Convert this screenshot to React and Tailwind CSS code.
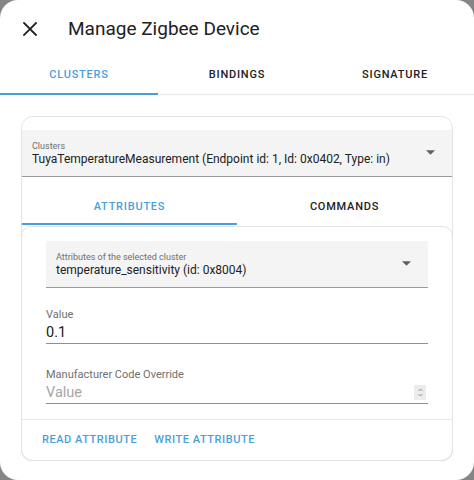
import { useState } from 'react';

const BLUE = 'text-[#4a9fd9]';

const CloseIcon = () => (
  <svg width="14" height="14" viewBox="0 0 14 14" className="text-[#212121]">
    <path d="M1 1 L13 13 M13 1 L1 13" stroke="currentColor" strokeWidth="1.8" strokeLinecap="square" />
  </svg>
);

const Arrow = () => (
  <svg width="9" height="5" viewBox="0 0 10 5" className="text-[#616161]">
    <path d="M0 0 L10 0 L5 5 Z" fill="currentColor" />
  </svg>
);

const Tab = ({ label, active, onClick, className }) => (
  <button
    type="button"
    onClick={onClick}
    className={`flex flex-1 items-center justify-center border-b-2 text-[11px] font-medium uppercase tracking-[0.07em] ${
      active ? 'border-[#4a9fd9] text-[#4a9fd9]' : 'border-transparent text-[#212121]'
    } ${className}`}
  >
    {label}
  </button>
);

const Select = ({ label, value, className }) => (
  <div
    className={`flex h-[47px] items-start justify-between border-b border-[#9a9a9a] bg-[#f4f4f4] ${className}`}
  >
    <div className="flex flex-col pt-[11px]">
      <span className="text-[9px] leading-[10px] text-[#6f6f6f]">{label}</span>
      <span className="mt-[1px] text-[12px] leading-[15px] text-[#212121]">{value}</span>
    </div>
    <div className="pt-[20px]">
      <Arrow />
    </div>
  </div>
);

export default function App() {
  const [tab, setTab] = useState('clusters');
  const [subTab, setSubTab] = useState('attributes');

  return (
    <div className="h-[480px] w-[474px] bg-[#858585]" style={{ fontFamily: 'Roboto, "Noto Sans", sans-serif' }}>
      <div className="flex h-[480px] flex-col overflow-hidden rounded-[18px] bg-white">
        <header className="flex h-[54px] items-center pt-[4px]">
          <button type="button" className="ml-[23px] flex h-[14px] w-[14px] items-center justify-center">
            <CloseIcon />
          </button>
          <h1 className="ml-[31px] text-[19px] text-[#212121]">Manage Zigbee Device</h1>
        </header>

        <nav className="flex h-[41px] border-b border-[#e8e8e8]">
          <Tab label="Clusters" active={tab === 'clusters'} onClick={() => setTab('clusters')} className="-mb-px pt-[3px]" />
          <Tab label="Bindings" active={tab === 'bindings'} onClick={() => setTab('bindings')} className="-mb-px pt-[3px]" />
          <Tab label="Signature" active={tab === 'signature'} onClick={() => setTab('signature')} className="-mb-px pt-[3px]" />
        </nav>

        <section className="mx-[21px] mt-[21px] rounded-[12px] border border-[#e3e3e3] pt-[13px]">
          <Select
            label="Clusters"
            value="TuyaTemperatureMeasurement (Endpoint id: 1, Id: 0x0402, Type: in)"
            className="pl-[10px] pr-[17px]"
          />

          <div className="flex h-[48px]">
            <Tab
              label="Attributes"
              active={subTab === 'attributes'}
              onClick={() => setSubTab('attributes')}
              className="pt-[14px]"
            />
            <Tab
              label="Commands"
              active={subTab === 'commands'}
              onClick={() => setSubTab('commands')}
              className="pt-[14px]"
            />
          </div>

          <div className="-mx-px -mb-px mt-[1px] rounded-[10px] border border-[#e3e3e3]">
            <div className="px-[24px] pb-[15px] pt-[14px]">
              <Select
                label="Attributes of the selected cluster"
                value="temperature_sensitivity (id: 0x8004)"
                className="pl-[10px] pr-[17px]"
              />

              <label className="mt-[20px] flex flex-col">
                <span className="text-[11px] leading-[14px] text-[#6f6f6f]">Value</span>
                <input
                  defaultValue="0.1"
                  className="h-[22px] border-b border-[#8f8f8f] text-[14.5px] text-[#212121] outline-none"
                />
              </label>

              <label className="mt-[24px] flex flex-col">
                <span className="text-[11px] leading-[14px] text-[#6f6f6f]">Manufacturer Code Override</span>
                <div className="flex h-[22px] items-center border-b border-[#8f8f8f]">
                  <input
                    placeholder="Value"
                    className="min-w-0 flex-1 text-[14.5px] text-[#212121] outline-none placeholder:text-[#a5a5a5]"
                  />
                  <span className="mr-[2px] flex h-[15px] w-[12px] items-center justify-center bg-[#ececec] text-[#8a8a8a]">
                    <svg width="7" height="11" viewBox="0 0 7 11">
                      <path d="M1.5 4 L3.5 2 L5.5 4 M1.5 7 L3.5 9 L5.5 7" stroke="currentColor" strokeWidth="0.9" fill="none" />
                    </svg>
                  </span>
                </div>
              </label>
            </div>

            <footer className={`flex h-[41px] items-center gap-[17px] border-t border-[#e8e8e8] px-[20px] text-[11px] font-medium tracking-[0.05em] ${BLUE}`}>
              <button type="button">READ ATTRIBUTE</button>
              <button type="button">WRITE ATTRIBUTE</button>
            </footer>
          </div>
        </section>
      </div>
    </div>
  );
}
